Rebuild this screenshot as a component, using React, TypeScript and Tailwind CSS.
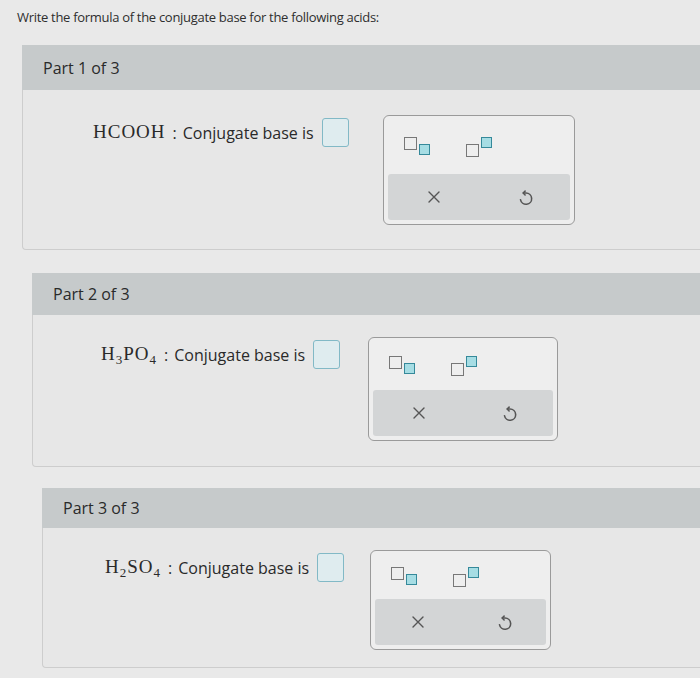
import React from 'react';

type PartProps = {
    label: string;
    formula: React.ReactNode;
    shift: string;
    headerH: string;
    bodyH: string;
    rowPad: string;
    gap: string;
    palette: string;
};

function SubIcon() {
    return (
        <span className="relative inline-block w-[26px] h-[20px]">
            <span className="absolute left-0 top-0 w-[13px] h-[13px] border-[1.5px] border-[#777]" />
            <span className="absolute left-[15px] top-[7px] w-[11px] h-[11px] border-[1.5px] border-[#35899a] bg-[#a6dde4]" />
        </span>
    );
}

function SupIcon() {
    return (
        <span className="relative inline-block w-[26px] h-[20px]">
            <span className="absolute left-0 top-[7px] w-[13px] h-[13px] border-[1.5px] border-[#777]" />
            <span className="absolute left-[15px] top-0 w-[11px] h-[11px] border-[1.5px] border-[#35899a] bg-[#a6dde4]" />
        </span>
    );
}

function UndoIcon() {
    return (
        <svg width="18" height="18" viewBox="0 0 16 16" fill="none" stroke="#555" strokeWidth="1.4" strokeLinecap="round" strokeLinejoin="round">
            <path d="M3.1 10.4 A5 5 0 1 0 8 4.5 H5.6" />
            <path d="M7.2 2.8 L5.5 4.5 L7.2 6.2" />
        </svg>
    );
}

function CloseIcon() {
    return (
        <svg width="16" height="16" viewBox="0 0 16 16" fill="none" stroke="#555" strokeWidth="1.4" strokeLinecap="round">
            <path d="M3 3 L13 13 M13 3 L3 13" />
        </svg>
    );
}

function Palette({ size }: { size: string }) {
    return (
        <div className={`${size} flex flex-col rounded-[6px] border border-[#9a9a9a] bg-[#eeeeee] p-[4px]`}>
            <div className="flex-1 flex items-center pl-[16px] gap-[36px]">
                <SubIcon />
                <SupIcon />
            </div>
            <div className="h-[46px] rounded-[3px] bg-[#d3d5d6] flex items-center">
                <div className="flex-1 flex justify-center pl-[2px]">
                    <CloseIcon />
                </div>
                <div className="flex-1 flex justify-center pl-[4px]">
                    <UndoIcon />
                </div>
            </div>
        </div>
    );
}

function Part({ label, formula, shift, headerH, bodyH, rowPad, gap, palette }: PartProps) {
    return (
        <section className={`${shift} w-[720px]`}>
            <div className={`${headerH} bg-[#c6cacb] flex items-center pl-[21px] text-[16px] text-[#2a2a2a]`}>
                {label}
            </div>
            <div className={`${bodyH} ${rowPad} border border-t-0 border-[#cdcdcd] bg-[#e7e7e7] rounded-bl-[4px] flex items-start`}>
                <div className="flex items-center text-[#2a2a2a]">
                    <span className="font-['Liberation_Serif',serif] text-[19px] tracking-[1px]">{formula}</span>
                    <span className="ml-[7px] text-[16px]">:</span>
                    <span className="ml-[6px] text-[16px]">Conjugate base is</span>
                    <span className="ml-[8px] w-[27px] h-[29px] rounded-[3px] border-[1.5px] border-[#82b9c6] bg-[#dfecef]" />
                </div>
                <div className={`${gap} -mt-[3px]`}>
                    <Palette size={palette} />
                </div>
            </div>
        </section>
    );
}

export default function App() {
    return (
        <div className="w-[700px] h-[678px] overflow-hidden bg-[#e9e9e9] font-['Open_Sans',sans-serif]">
            <p className="pl-[17px] pt-[8px] h-[45px] text-[13px] tracking-[-0.3px] text-[#2e2e2e]">
                Write the formula of the conjugate base for the following acids:
            </p>
            <Part
                label="Part 1 of 3"
                formula="HCOOH"
                shift="ml-[22px]"
                headerH="h-[45px]"
                bodyH="h-[160px]"
                rowPad="pl-[70px] pt-[28px]"
                gap="ml-[34px]"
                palette="w-[192px] h-[110px]"
            />
            <div className="h-[23px]" />
            <Part
                label="Part 2 of 3"
                formula={<>H<sub className="text-[13px]">3</sub>PO<sub className="text-[13px]">4</sub></>}
                shift="ml-[32px]"
                headerH="h-[42px]"
                bodyH="h-[152px]"
                rowPad="pl-[68px] pt-[25px]"
                gap="ml-[28px]"
                palette="w-[190px] h-[104px]"
            />
            <div className="h-[21px]" />
            <Part
                label="Part 3 of 3"
                formula={<>H<sub className="text-[13px]">2</sub>SO<sub className="text-[13px]">4</sub></>}
                shift="ml-[42px]"
                headerH="h-[40px]"
                bodyH="h-[140px]"
                rowPad="pl-[62px] pt-[25px]"
                gap="ml-[26px]"
                palette="w-[181px] h-[100px]"
            />
        </div>
    );
}
